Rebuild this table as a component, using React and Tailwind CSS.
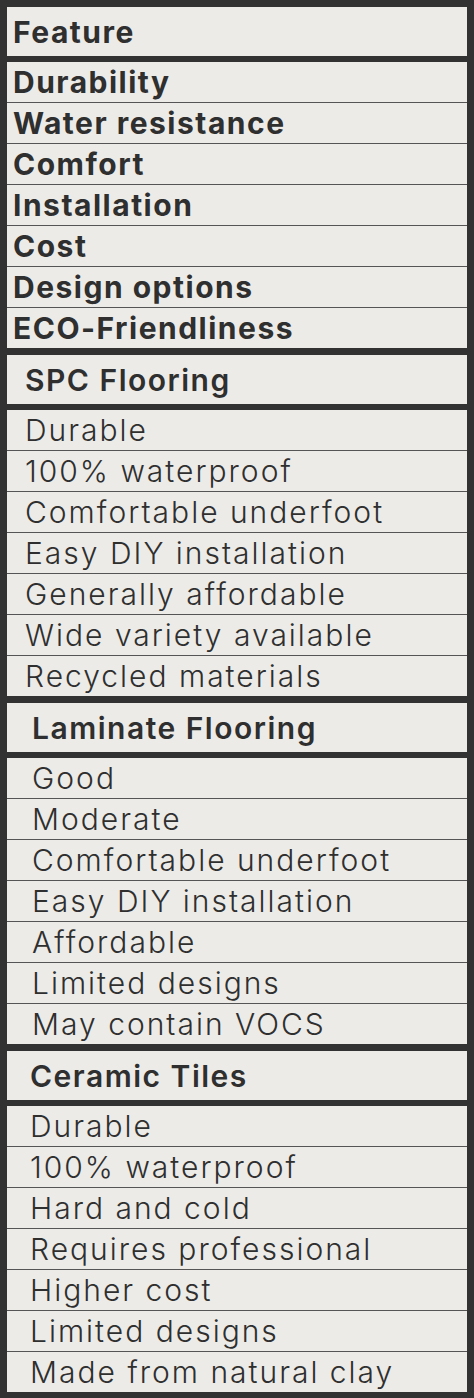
const columns = [
  {
    title: 'Feature',
    pad: 'pl-[6px]',
    bold: true,
    rows: ['Durability', 'Water resistance', 'Comfort', 'Installation', 'Cost', 'Design options', 'ECO-Friendliness'],
  },
  {
    title: 'SPC Flooring',
    pad: 'pl-[18px]',
    rows: ['Durable', '100% waterproof', 'Comfortable underfoot', 'Easy DIY installation', 'Generally affordable', 'Wide variety available', 'Recycled materials'],
  },
  {
    title: 'Laminate Flooring',
    pad: 'pl-[25px]',
    rows: ['Good', 'Moderate', 'Comfortable underfoot', 'Easy DIY installation', 'Affordable', 'Limited designs', 'May contain VOCS'],
  },
  {
    title: 'Ceramic Tiles',
    pad: 'pl-[23px]',
    rows: ['Durable', '100% waterproof', 'Hard and cold', 'Requires professional', 'Higher cost', 'Limited designs', 'Made from natural clay'],
  },
]

function Block({ col }) {
  return (
    <div className="border-x-[7px] border-t-[7px] border-[#323232]">
      <div className={`h-[49px] flex items-center ${col.pad} text-[30px] leading-none ${col.bold ? 'font-bold tracking-[1.5px]' : 'font-semibold tracking-[1.5px]'}`}>
        {col.title}
      </div>
      <div className="border-t-[6px] border-[#323232]">
        {col.rows.map((r, i) => (
          <div
            key={i}
            className={`flex items-center whitespace-nowrap ${col.pad} text-[30px] leading-none ${col.bold ? 'font-bold tracking-[1.5px]' : 'font-light tracking-[2px]'} ${i > 0 ? 'h-[41px] border-t border-[#555]' : 'h-[40px]'}`}
          >
            {r}
          </div>
        ))}
      </div>
    </div>
  )
}

export default function App() {
  return (
    <div
      className="w-[474px] h-[1398px] bg-[#ecebe8] text-[#2f2f2f] overflow-hidden"
      style={{ fontFamily: 'Inter, "Noto Sans", sans-serif' }}
    >
      {columns.map((c) => (
        <Block key={c.title} col={c} />
      ))}
      <div className="h-[6px] bg-[#323232]" />
    </div>
  )
}
